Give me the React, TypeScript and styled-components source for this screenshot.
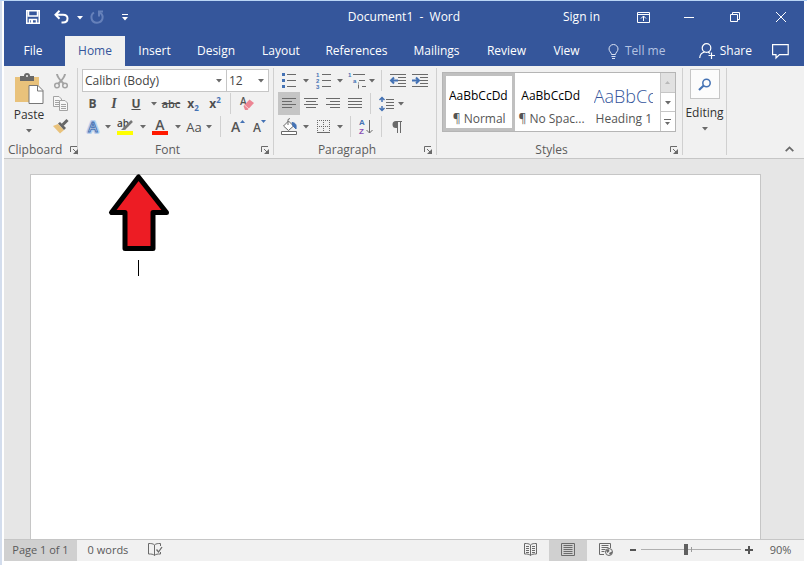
import React from "react";
import styled, { createGlobalStyle, css } from "styled-components";

const blue = "#35569b";
const accent = "#4472b4";
const ink = "#444444";
const grey = "#6a6a6a";
const line = "#c6c6c6";

const GlobalStyle = createGlobalStyle`
  *, *::before, *::after { box-sizing: border-box; }
  body {
    margin: 0;
    background: #ffffff;
    font-family: "Open Sans", "Noto Sans", sans-serif;
    font-size: 12px;
    line-height: 16px;
    color: ${ink};
  }
  button, select, input { font: inherit; color: inherit; margin: 0; }
  svg { display: block; flex: none; overflow: visible; }
`;

const Desktop = styled.div`
  min-height: 100vh;
  display: flex;
  flex-direction: column;
  padding: 1px 3px 4px 4px;
  background: linear-gradient(#b9d5f5, #b9d5f5) top / 100% 1px no-repeat,
    linear-gradient(#d3dded, #d3dded) left / 2px 100% no-repeat, #ffffff;
`;

const plainButton = css`
  display: inline-flex;
  align-items: center;
  justify-content: center;
  padding: 0;
  border: 0;
  background: none;
  flex: none;
  white-space: nowrap;
`;

const TitleBar = styled.header`
  display: grid;
  grid-template-columns: 1fr auto 1fr;
  align-items: center;
  height: 35px;
  padding-bottom: 3px;
  background: ${blue};
  color: #ffffff;
`;

const QuickAccess = styled.div`
  display: flex;
  align-items: center;
  padding-left: 17px;
`;

const QuickButton = styled.button<{ $w: number }>`
  ${plainButton}
  width: ${(p) => p.$w}px;
  height: 24px;
`;

const DocTitle = styled.h1`
  margin: 0;
  font-size: 12px;
  font-weight: 400;
  white-space: pre;
`;

const WindowControls = styled.div`
  display: flex;
  align-items: center;
  justify-content: flex-end;
`;

const SignIn = styled.button`
  ${plainButton}
  margin-right: 20px;
`;

const WindowButton = styled.button`
  ${plainButton}
  width: 46px;
  height: 30px;
`;

const TabBar = styled.nav`
  display: flex;
  align-items: stretch;
  height: 30px;
  background: ${blue};
  color: #ffffff;
`;

const Tab = styled.button<{ $w: number; $active?: boolean }>`
  ${plainButton}
  width: ${(p) => p.$w}px;
  ${(p) => p.$active && css`background: #f1f1f1; color: ${blue};`}
`;

const FileTab = styled(Tab)`
  padding-right: 3px;
`;

const TabAction = styled.button<{ $dim?: boolean }>`
  ${plainButton}
  gap: 6px;
  padding: 0 14px;
  color: ${(p) => (p.$dim ? "#b4c3e2" : "#ffffff")};
`;

const ShareAction = styled(TabAction)`
  gap: 5px;
  padding: 0 9px;
`;

const TabSpacer = styled.div`
  flex: 1;
`;

const CommentButton = styled.button`
  ${plainButton}
  width: 43px;
  padding-right: 4px;
`;

const Ribbon = styled.div`
  display: flex;
  height: 93px;
  padding: 2px 0 1px;
  background: #f1f1f1;
  border-bottom: 1px solid ${line};
`;

const Group = styled.section<{ $w: number }>`
  width: ${(p) => p.$w}px;
  flex: none;
  display: flex;
  flex-direction: column;
  margin-bottom: 2px;
  padding: 1px 0 0 4px;
  border-right: 1px solid #d0d0d0;
`;

const GroupBody = styled.div`
  flex: 1;
`;

const GroupFooter = styled.footer`
  display: flex;
  align-items: center;
  height: 17px;
  padding-top: 6px;
  color: #5c5c5c;
`;

const GroupName = styled.span`
  flex: 1;
  padding-right: 4px;
  text-align: center;
`;

const Launcher = styled.button`
  ${plainButton}
  width: 16px;
  height: 16px;
`;

const Row = styled.div`
  display: flex;
  align-items: center;
  height: 23px;
`;

const Tool = styled.button<{ $w?: number; $on?: boolean }>`
  ${plainButton}
  width: ${(p) => p.$w ?? 22}px;
  height: 23px;
  font-size: 13px;
  color: #4f4f4f;
  background: ${(p) => (p.$on ? "#c5c5c5" : "transparent")};
`;

const Divider = styled.span<{ $before: number; $after: number }>`
  width: 1px;
  height: 21px;
  flex: none;
  background: #d0d0d0;
  margin: 0 ${(p) => p.$after}px 0 ${(p) => p.$before}px;
`;

const Bold = styled.b`
  font-size: 12px;
`;
const Italic = styled.i`
  font-family: "Liberation Serif", serif;
  font-weight: 700;
  font-size: 14px;
`;
const Underlined = styled.u`
  font-weight: 700;
  font-size: 12px;
`;
const Struck = styled.s`
  font-weight: 600;
  font-size: 11px;
`;
const ScriptBase = styled.span`
  display: flex;
  font-weight: 700;
  font-size: 12px;
`;
const ScriptMark = styled.small<{ $up?: boolean }>`
  font-size: 8px;
  line-height: 8px;
  color: ${accent};
  align-self: ${(p) => (p.$up ? "flex-start" : "flex-end")};
`;

const Clip = styled.div`
  display: flex;
`;

const PasteButton = styled.button`
  ${plainButton}
  flex-direction: column;
  justify-content: flex-start;
  width: 42px;
  padding: 4px 0 0;
  color: #333333;
  gap: 2px;
`;

const CaretGap = styled.span`
  padding-top: 4px;
`;

const ClipColumn = styled.div`
  display: flex;
  flex-direction: column;
`;

const Combo = styled.div<{ $w: number }>`
  position: relative;
  width: ${(p) => p.$w}px;
  & + & { margin-left: -1px; }
  svg {
    position: absolute;
    right: 5px;
    top: 10px;
    pointer-events: none;
  }
`;

const ComboSelect = styled.select`
  appearance: none;
  width: 100%;
  height: 23px;
  padding: 0 2px;
  border: 1px solid ${line};
  border-radius: 0;
  background: #ffffff;
  display: block;
`;

const Gallery = styled.div`
  display: flex;
  height: 60px;
  margin: 3px 6px 0 1px;
  border: 1px solid #b5b5b5;
  background: #ffffff;
`;

const StyleCard = styled.button<{ $on?: boolean }>`
  ${plainButton}
  flex: 1 1 0;
  min-width: 0;
  flex-direction: column;
  justify-content: flex-end;
  gap: 4px;
  padding-bottom: 1px;
  border: 3px solid ${(p) => (p.$on ? "#c0c0c0" : "transparent")};
  overflow: hidden;
  color: #555555;
`;

const Sample = styled.span<{ $heading?: boolean }>`
  width: 100%;
  padding: 0 4px 0 3px;
  text-align: left;
  line-height: 22px;
  font-size: ${(p) => (p.$heading ? 18 : 12)}px;
  font-weight: ${(p) => (p.$heading ? 300 : 400)};
  color: ${(p) => (p.$heading ? "#35569b" : "#000000")};
`;

const SampleClip = styled.span`
  display: block;
  overflow: hidden;
`;

const GalleryScroll = styled.div`
  display: flex;
  flex-direction: column;
  width: 15px;
  border-left: 1px solid ${line};
`;

const GalleryButton = styled.button<{ $off?: boolean }>`
  ${plainButton}
  flex: 1;
  background: ${(p) => (p.$off ? "#e1e1e1" : "#ffffff")};
  & + & { border-top: 1px solid ${line}; }
`;

const EditingButton = styled.button`
  ${plainButton}
  flex-direction: column;
  width: 100%;
  padding-right: 4px;
  color: #333333;
  gap: 6px;
`;

const EditingIcon = styled.span`
  display: flex;
  align-items: center;
  justify-content: center;
  width: 30px;
  height: 30px;
  border: 1px solid ${line};
  background: #fcfcfc;
`;

const Collapse = styled.button`
  ${plainButton}
  margin-left: auto;
  align-self: flex-end;
  width: 30px;
  height: 16px;
`;

const Workspace = styled.main`
  flex: 1;
  display: flex;
  padding: 15px 43px 0 26px;
  background: #e6e6e6;
`;

const Paper = styled.article`
  flex: 1;
  position: relative;
  padding: 85px 107px 0;
  background: #ffffff;
  border: 1px solid ${line};
  border-bottom: 0;
`;

const InsertionPoint = styled.div`
  width: 1px;
  height: 16px;
  background: #000000;
`;

const Pointer = styled.div`
  position: absolute;
  left: 77px;
  top: -2px;
`;

const StatusBar = styled.footer`
  display: flex;
  align-items: stretch;
  height: 22px;
  background: #f1f1f1;
  border-top: 1px solid ${line};
  color: #5a5a5a;
`;

const StatusButton = styled.button<{ $on?: boolean; $w: number }>`
  ${plainButton}
  width: ${(p) => p.$w}px;
  padding-bottom: 2px;
  font-size: 11px;
  background: ${(p) => (p.$on ? "#d0d0d0" : "transparent")};
`;

const ZoomRange = styled.input`
  appearance: none;
  width: 100px;
  height: 19px;
  background: linear-gradient(#9a9a9a, #9a9a9a) 50px 50% / 1px 5px no-repeat,
    linear-gradient(#b0b0b0, #b0b0b0) 0 50% / 100% 1px no-repeat;
  &::-webkit-slider-thumb {
    appearance: none;
    width: 4px;
    height: 11px;
    background: #606060;
  }
`;

const Caret = ({ color = grey }: { color?: string }) => (
  <svg width="6" height="3" viewBox="0 0 6 3" aria-hidden="true">
    <path d="M0 0h6L3 3.500z" fill={color} />
  </svg>
);

const LaunchIcon = () => (
  <svg width="9" height="8" viewBox="0 0 9 8" fill="none" stroke={grey}>
    <path d="M.5 6V.5H7M3 3l3 3" />
    <path d="M8 3v5H3z" fill={grey} stroke="none" />
  </svg>
);

const Footer = ({ name }: { name: string }) => (
  <GroupFooter>
    <GroupName>{name}</GroupName>
    <Launcher aria-label={`${name} settings`}><LaunchIcon /></Launcher>
  </GroupFooter>
);

const lines = (rows: [number, number][]) => (
  <svg width="16" height="13" viewBox="0 0 16 13" stroke={grey}>
    {rows.map(([a, b], i) => <path key={i} d={`M${a} ${i * 3 + 1.5}H${b}`} />)}
  </svg>
);

const tabs: [string, number][] = [
  ["Insert", 59], ["Design", 64], ["Layout", 66], ["References", 85],
  ["Mailings", 75], ["Review", 65], ["View", 55],
];

const Title = () => (
  <TitleBar>
    <QuickAccess>
      <QuickButton $w={24} aria-label="Save">
        <svg width="14" height="14" viewBox="0 0 14 14" fill="none" stroke="#fff" strokeWidth="1.500">
          <path d="M.75.75h12.500v12.500H.75zM2.500 1v5h9V1M3.500 13V9.500h7V13" />
          <path d="M5 10h2v3H5z" fill="#fff" stroke="none" />
        </svg>
      </QuickButton>
      <QuickButton $w={32} aria-label="Undo">
        <svg width="15" height="14" viewBox="0 0 15 14" fill="none" stroke="#fff" strokeWidth="2">
          <path d="M5.500.700 1.500 4.700l4 4M2 4.700h7c3 0 4.500 1.600 4.500 3.800S12 12.500 9 12.500H7.500" />
        </svg>
      </QuickButton>
      <QuickButton $w={6} aria-label="Undo history"><Caret color="#fff" /></QuickButton>
      <QuickButton $w={28} aria-label="Redo">
        <svg width="14" height="14" viewBox="0 0 14 14" fill="none" stroke="#6681ba" strokeWidth="2">
          <path d="M4 2.500C0 5 .5 12.500 7 12.700c6 0 7.500-7 3-10" />
          <path d="M13 1.500H9v5" />
        </svg>
      </QuickButton>
      <QuickButton $w={28} aria-label="Customize quick access">
        <svg width="6" height="7" viewBox="0 0 6 7" fill="#fff"><path d="M0 0h6v1H0zM0 3h6L3 6.500z" /></svg>
      </QuickButton>
    </QuickAccess>
    <DocTitle>{"Document1  -  Word"}</DocTitle>
    <WindowControls>
      <SignIn>Sign in</SignIn>
      <WindowButton aria-label="Ribbon display options">
        <svg width="13" height="11" viewBox="0 0 13 11" fill="none" stroke="#fff">
          <path d="M.5.500h12v10H.5zM.5 2.500h12M6.500 9V4M4 6.500 6.500 4 9 6.500" />
        </svg>
      </WindowButton>
      <WindowButton aria-label="Minimize">
        <svg width="10" height="1" viewBox="0 0 10 1"><path d="M0 0h10v1H0z" fill="#fff" /></svg>
      </WindowButton>
      <WindowButton aria-label="Restore">
        <svg width="10" height="10" viewBox="0 0 10 10" fill="none" stroke="#fff">
          <path d="M.5 2.500h7v7h-7zM2.500 2V.5h7v7H8" />
        </svg>
      </WindowButton>
      <WindowButton aria-label="Close">
        <svg width="10" height="10" viewBox="0 0 10 10" stroke="#fff"><path d="m0 0 10 10M10 0 0 10" /></svg>
      </WindowButton>
    </WindowControls>
  </TitleBar>
);

const Tabs = () => (
  <TabBar>
    <FileTab $w={61}>File</FileTab>
    <Tab $w={60} $active>Home</Tab>
    {tabs.map(([name, w]) => <Tab key={name} $w={w}>{name}</Tab>)}
    <TabAction $dim>
      <svg width="11" height="15" viewBox="0 0 11 15" fill="none" stroke="#dbe3f3">
        <path d="M3.500 10.500C3.500 8.500 1 7.500 1 5a4.500 4.500 0 0 1 9 0c0 2.500-2.500 3.500-2.500 5.500zM3.500 12.500h4M4 14.500h3" />
      </svg>
      Tell me
    </TabAction>
    <TabSpacer />
    <ShareAction>
      <svg width="16" height="16" viewBox="0 0 16 16" fill="none" stroke="#fff" strokeWidth="1.200">
        <circle cx="7.500" cy="5" r="4.300" />
        <path d="M.7 15c.3-3.500 2.300-5.500 5-6M9 9l2 1.500M9.500 12.500H16M12.500 9.500V16" />
      </svg>
      Share
    </ShareAction>
    <CommentButton aria-label="Comments">
      <svg width="17" height="15" viewBox="0 0 17 15" fill="none" stroke="#fff" strokeWidth="1.200">
        <path d="M.6.600h15.600v10H7.500L4 14v-3.400H.6z" />
      </svg>
    </CommentButton>
  </TabBar>
);

const ClipboardGroup = () => (
  <Group $w={74}>
    <GroupBody as={Clip}>
      <PasteButton>
        <svg width="30" height="32" viewBox="0 0 30 32">
          <path d="M1 4h24v25H1z" fill="#e9c27b" />
          <path d="M6 3h4a3 3 0 0 1 6 0h4v5H6z" fill="#686868" />
          <circle cx="13" cy="3" r="1" fill="#f1f1f1" />
          <path d="M15 12.500h9l5 5v13H15z" fill="#fff" stroke="#777" />
          <path d="M23.500 13v5H29" fill="none" stroke="#777" />
        </svg>
        Paste
        <CaretGap><Caret /></CaretGap>
      </PasteButton>
      <ClipColumn>
        <Tool aria-label="Cut">
          <svg width="14" height="16" viewBox="0 0 14 16" fill="none" stroke="#a3a3a3" strokeWidth="1.500">
            <path d="M3 1C3.500 5 7 8 10 11M11 1C10.500 5 7 8 4 11" strokeWidth="2" />
            <circle cx="3" cy="12.500" r="2.300" /><circle cx="11" cy="12.500" r="2.300" />
          </svg>
        </Tool>
        <Tool aria-label="Copy">
          <svg width="16" height="15" viewBox="0 0 16 15" fill="#f7f7f7" stroke="#a3a3a3">
            <path d="M.5.500H6L8.500 3v7.500h-8zM2 4.500h4M2 6.500h4M2 8.500h4" />
            <path d="M6.500 4.500H12L14.500 7v7.500h-8zM8 8.500h5M8 10.500h5M8 12.500h5" />
          </svg>
        </Tool>
        <Tool aria-label="Format painter">
          <svg width="16" height="15" viewBox="0 0 16 15">
            <path d="m0 7 5-2 6 6-4 3.500z" fill="#e9c27b" />
            <path d="m5 4.500 2-1.500 6 6-2 2z" fill="#666" />
            <path d="m9.500 6 5-5" stroke="#666" strokeWidth="3" />
          </svg>
        </Tool>
      </ClipColumn>
    </GroupBody>
    <Footer name="Clipboard" />
  </Group>
);

const FontGroup = () => (
  <Group $w={196}>
    <GroupBody>
      <Row>
        <Combo $w={145}>
          <ComboSelect aria-label="Font"><option>Calibri (Body)</option></ComboSelect>
          <Caret />
        </Combo>
        <Combo $w={43}>
          <ComboSelect aria-label="Font size"><option>12</option></ComboSelect>
          <Caret />
        </Combo>
      </Row>
      <Row>
        <Tool $w={21}><Bold>B</Bold></Tool>
        <Tool><Italic>I</Italic></Tool>
        <Tool><Underlined>U</Underlined></Tool>
        <Tool $w={13} aria-label="Underline style"><Caret /></Tool>
        <Tool><Struck>abc</Struck></Tool>
        <Tool><ScriptBase>x<ScriptMark>2</ScriptMark></ScriptBase></Tool>
        <Tool><ScriptBase>x<ScriptMark $up>2</ScriptMark></ScriptBase></Tool>
        <Divider $before={4} $after={5} />
        <Tool aria-label="Clear formatting">
          <svg width="15" height="15" viewBox="0 0 15 15">
            <text x="0" y="9" fontSize="10" fontWeight="600" fill="#555">A</text>
            <path d="m3.500 10 6-6.500L14 7l-6.500 7H5z" fill="#ec8593" />
            <path d="m4.500 9 4.500 4" stroke="#f8d5da" />
          </svg>
        </Tool>
      </Row>
      <Row>
        <Tool $w={21} aria-label="Text effects">
          <svg width="18" height="18" viewBox="0 0 18 18">
            <text x="9" y="14" textAnchor="middle" fontSize="14" fontWeight="600" fill="#fff" stroke="#b9d0ee" strokeWidth="4" strokeLinejoin="round">A</text>
            <text x="9" y="14" textAnchor="middle" fontSize="14" fontWeight="600" fill="#fff" stroke="#4472b4" strokeWidth="1">A</text>
          </svg>
        </Tool>
        <Tool $w={10} aria-label="Effects menu"><Caret /></Tool>
        <Tool $w={24} aria-label="Highlight colour">
          <svg width="16" height="17" viewBox="0 0 16 17">
            <text x="0" y="9" fontSize="10" fontWeight="600" fill="#444">ab</text>
            <path d="m7 11 8-8" stroke="#777" strokeWidth="2.500" />
            <path d="m4 12 3-3 2 2-2 1z" fill="#777" />
            <path d="M0 13h16v4H0z" fill="#ffff00" />
          </svg>
        </Tool>
        <Tool $w={11} aria-label="Highlight menu"><Caret /></Tool>
        <Tool $w={24} aria-label="Font colour">
          <svg width="16" height="17" viewBox="0 0 16 17">
            <text x="8" y="12" textAnchor="middle" fontSize="14" fontWeight="600" fill="#555">A</text>
            <path d="M0 13h16v4H0z" fill="#ff1a00" />
          </svg>
        </Tool>
        <Tool $w={11} aria-label="Font colour menu"><Caret /></Tool>
        <Tool>Aa</Tool>
        <Tool $w={7} aria-label="Change case menu"><Caret /></Tool>
        <Divider $before={8} $after={5} />
        <Tool aria-label="Grow font">
          <svg width="16" height="16" viewBox="0 0 16 16">
            <text x="2" y="13" fontSize="14" fontWeight="600" fill="#555">A</text>
            <path d="M11 4h5l-2.500-3z" fill={accent} />
          </svg>
        </Tool>
        <Tool aria-label="Shrink font">
          <svg width="16" height="16" viewBox="0 0 16 16">
            <text x="2" y="13" fontSize="12" fontWeight="600" fill="#555">A</text>
            <path d="M10 1h5l-2.500 3z" fill={accent} />
          </svg>
        </Tool>
      </Row>
    </GroupBody>
    <Footer name="Font" />
  </Group>
);

const IndentIcon = ({ out }: { out?: boolean }) => (
  <svg width="16" height="13" viewBox="0 0 16 13" fill="none" stroke={grey}>
    <path d="M0 .5h16M8 3.500h8M8 6.500h8M8 9.500h8M0 12.500h16" />
    <path d={out ? "M8 6.500H1M4 3.500l-3 3 3 3" : "M0 6.500h7M4 3.500l3 3-3 3"} stroke={accent} strokeWidth="2" />
  </svg>
);

const ListMark = styled.text`
  font-family: "Liberation Sans", sans-serif;
  font-size: 6px;
  font-weight: 700;
  fill: ${accent};
  stroke: none;
`;

const ParagraphGroup = () => (
  <Group $w={163}>
    <GroupBody>
      <Row>
        <Tool aria-label="Bullets">
          <svg width="14" height="15" viewBox="0 0 14 15" stroke={grey}>
            <path d="M5 1.500h9M5 7.500h9M5 13.500h9" />
            <path d="M0 1.500h3M0 7.500h3M0 13.500h3" stroke={accent} strokeWidth="3" />
          </svg>
        </Tool>
        <Tool $w={12} aria-label="Bullet menu"><Caret /></Tool>
        <Tool aria-label="Numbering">
          <svg width="15" height="17" viewBox="0 0 15 17" stroke={grey}>
            <path d="M6 2.500h9M6 8.500h9M6 14.500h9" />
            <ListMark x="0" y="5">1</ListMark>
            <ListMark x="0" y="11">2</ListMark>
            <ListMark x="0" y="17">3</ListMark>
          </svg>
        </Tool>
        <Tool $w={12} aria-label="Numbering menu"><Caret /></Tool>
        <Tool aria-label="Multilevel list">
          <svg width="18" height="17" viewBox="0 0 18 17" stroke={grey}>
            <path d="M5 2.500h12M11 8.500h6M14 14.500h4M10.500 10.500v1M10.500 12.500v4" />
            <ListMark x="0" y="5">1</ListMark>
            <ListMark x="5" y="11">a</ListMark>
          </svg>
        </Tool>
        <Tool $w={8} aria-label="List menu"><Caret /></Tool>
        <Divider $before={5} $after={5} />
        <Tool aria-label="Decrease indent"><IndentIcon out /></Tool>
        <Tool aria-label="Increase indent"><IndentIcon /></Tool>
      </Row>
      <Row>
        <Tool $on aria-label="Align left">{lines([[1, 15], [1, 11], [1, 15], [1, 11]])}</Tool>
        <Tool aria-label="Centre">{lines([[1, 15], [3, 13], [1, 15], [3, 13]])}</Tool>
        <Tool aria-label="Align right">{lines([[1, 15], [5, 15], [1, 15], [5, 15]])}</Tool>
        <Tool aria-label="Justify">{lines([[1, 15], [1, 15], [1, 15], [1, 15]])}</Tool>
        <Divider $before={4} $after={4} />
        <Tool aria-label="Line spacing">
          <svg width="15" height="16" viewBox="0 0 15 16" fill="none" stroke={grey}>
            <path d="M7 3.500h8M7 6.500h8M7 9.500h8M7 12.500h8" />
            <path d="M3 1v5M.5 4 3 1.500 5.500 4M3 15v-5M.5 12 3 14.500 5.500 12" stroke={accent} strokeWidth="1.500" />
          </svg>
        </Tool>
        <Tool $w={8} aria-label="Spacing menu"><Caret /></Tool>
      </Row>
      <Row>
        <Tool aria-label="Shading">
          <svg width="17" height="17" viewBox="0 0 17 17" fill="none" stroke={grey}>
            <path d="m2.500 8 5-5 5 5-5 4.500zM7 7V1.500l2-1" fill="#fff" />
            <path d="M11 4.500c4 .5 4.500 2.500 4 6.500l-3-3z" fill={accent} stroke={accent} />
            <path d="M.5 13.500h15v3H.5z" fill="#fff" />
          </svg>
        </Tool>
        <Tool $w={12} aria-label="Shading menu"><Caret /></Tool>
        <Tool aria-label="Borders">
          <svg width="13" height="13" viewBox="0 0 13 13" stroke={grey}>
            <path d="M0 .5h13M0 6.500h13M.5 0v13M6.500 0v13M12.500 0v13" strokeDasharray="1 1" />
            <path d="M0 12.500h13" />
          </svg>
        </Tool>
        <Tool $w={12} aria-label="Borders menu"><Caret /></Tool>
        <Divider $before={4} $after={4} />
        <Tool aria-label="Sort">
          <svg width="14" height="17" viewBox="0 0 14 17" fontFamily="Liberation Sans, sans-serif" fontSize="8" fontWeight="700">
            <text x="0" y="7" fill={accent}>A</text>
            <text x="0" y="16" fill="#8a4fb5">Z</text>
            <path d="M10.500 2v13M7.500 12l3 3 3-3" fill="none" stroke={grey} />
          </svg>
        </Tool>
        <Divider $before={4} $after={4} />
        <Tool aria-label="Show paragraph marks">
          <svg width="10" height="12" viewBox="0 0 10 12">
            <path d="M4 0h6v1H9v11H8V1H6v11H5V7H4a3.500 3.500 0 0 1 0-7z" fill={grey} />
          </svg>
        </Tool>
      </Row>
    </GroupBody>
    <Footer name="Paragraph" />
  </Group>
);

const StylesGroup = () => (
  <Group $w={246}>
    <GroupBody>
      <Gallery>
        <StyleCard $on><Sample><SampleClip>AaBbCcDd</SampleClip></Sample>¶ Normal</StyleCard>
        <StyleCard><Sample><SampleClip>AaBbCcDd</SampleClip></Sample>¶ No Spac...</StyleCard>
        <StyleCard><Sample $heading><SampleClip>AaBbCc</SampleClip></Sample>Heading 1</StyleCard>
        <GalleryScroll>
          <GalleryButton $off aria-label="Previous styles">
            <svg width="5" height="3" viewBox="0 0 5 3"><path d="M0 3h5L2.500 0z" fill="#b8b8b8" /></svg>
          </GalleryButton>
          <GalleryButton aria-label="Next styles"><Caret /></GalleryButton>
          <GalleryButton aria-label="More styles">
            <svg width="7" height="6" viewBox="0 0 7 6" fill={grey}><path d="M0 0h7v1H0zM1 3h5L3.500 6z" /></svg>
          </GalleryButton>
        </GalleryScroll>
      </Gallery>
    </GroupBody>
    <Footer name="Styles" />
  </Group>
);

const EditingGroup = () => (
  <Group $w={44}>
    <EditingButton>
      <EditingIcon>
        <svg width="14" height="13" viewBox="0 0 14 13" fill="none" stroke={accent}>
          <circle cx="8.500" cy="5" r="3.700" strokeWidth="1.500" />
          <path d="m5.700 7.500-4.700 4.500" strokeWidth="2.200" />
        </svg>
      </EditingIcon>
      Editing
      <Caret />
    </EditingButton>
  </Group>
);

const Status = () => (
  <StatusBar>
    <StatusButton $w={73} $on>Page 1 of 1</StatusButton>
    <StatusButton $w={62}>0 words</StatusButton>
    <StatusButton $w={32} aria-label="Proofing">
      <svg width="14" height="13" viewBox="0 0 14 13" fill="none" stroke={grey}>
        <path d="M6.500 12.500V2C5 .5 3 .5.500.500v10.500c3 0 4.500 0 6 1.500 1.500-1.500 3-1.500 6-1.500V9M6.500 2C8 .5 10 .5 12.500.500V3" />
        <path d="m8.500 6.500 2 2.500 3.500-5" strokeWidth="1.300" />
      </svg>
    </StatusButton>
    <TabSpacer />
    <StatusButton $w={38} aria-label="Read mode">
      <svg width="13" height="13" viewBox="0 0 13 13" fill="none" stroke={grey}>
        <path d="M6.500 12.500V2C5 .5 3 .5.500.500v10.500c3 0 4.500 0 6 1.500 1.500-1.500 3-1.500 6-1.500V.5C10 .5 8 .5 6.500 2M2 3.500h3M2 5.500h3M2 7.500h3M2 9.500h3M8 3.500h3M8 5.500h3M8 7.500h3M8 9.500h3" />
      </svg>
    </StatusButton>
    <StatusButton $w={38} $on aria-label="Print layout">
      <svg width="14" height="13" viewBox="0 0 14 13" fill="none" stroke={grey}>
        <path d="M.5.500h13v12H.5zM2.500 2.500h9M2.500 4.500h9M2.500 6.500h9M2.500 8.500h9M2.500 10.500h9" />
      </svg>
    </StatusButton>
    <StatusButton $w={38} aria-label="Web layout">
      <svg width="14" height="13" viewBox="0 0 14 13" fill="none" stroke={grey}>
        <path d="M5 11.500H.5V.5h11V5M2.500 2.500h7M2.500 4.500h7M2.500 6.500h4M2.500 8.500h3" />
        <circle cx="10" cy="9" r="3.500" fill="#f1f1f1" />
        <path d="M7 7.500 9.500 6l1 2-2 2zM10 10l3-1.500v2L11 12z" fill={grey} stroke="none" />
      </svg>
    </StatusButton>
    <StatusButton $w={16} aria-label="Zoom out">
      <svg width="6" height="2" viewBox="0 0 6 2"><path d="M0 0h6v2H0z" fill="#555" /></svg>
    </StatusButton>
    <ZoomRange type="range" min={0} max={100} defaultValue={45} aria-label="Zoom" />
    <StatusButton $w={16} aria-label="Zoom in">
      <svg width="8" height="8" viewBox="0 0 8 8"><path d="M3 0h2v3h3v2H5v3H3V5H0V3h3z" fill="#555" /></svg>
    </StatusButton>
    <StatusButton $w={47}>90%</StatusButton>
  </StatusBar>
);

export default function App() {
  return (
    <Desktop>
      <GlobalStyle />
      <Title />
      <Tabs />
      <Ribbon>
        <ClipboardGroup />
        <FontGroup />
        <ParagraphGroup />
        <StylesGroup />
        <EditingGroup />
        <Collapse aria-label="Collapse ribbon">
          <svg width="9" height="6" viewBox="0 0 9 6" fill="none" stroke={grey} strokeWidth="1.800">
            <path d="m.7 5.200 3.800-3.800 3.800 3.800" />
          </svg>
        </Collapse>
      </Ribbon>
      <Workspace>
        <Paper>
          <Pointer>
            <svg width="62" height="79" viewBox="0 0 62 79">
              <path d="M30.500 4 3.500 39.500H17v36h28v-36h13.500z" fill="#ed1c24" stroke="#000" strokeWidth="5" strokeLinejoin="round" />
            </svg>
          </Pointer>
          <InsertionPoint />
        </Paper>
      </Workspace>
      <Status />
    </Desktop>
  );
}
